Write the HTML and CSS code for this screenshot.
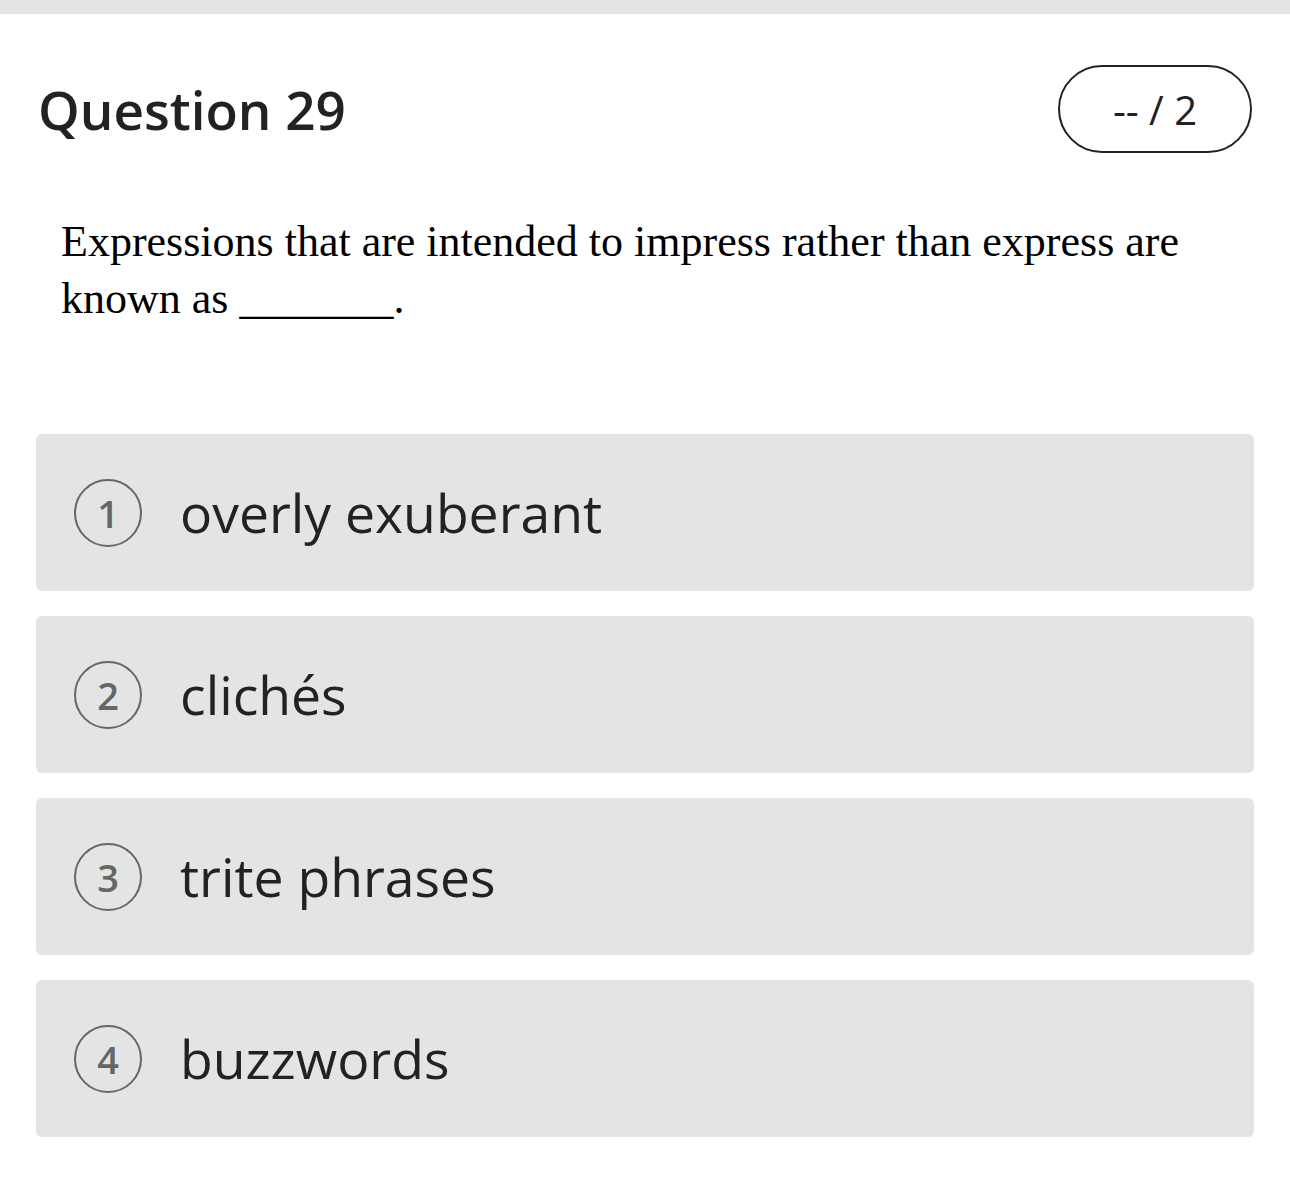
FILE: index.html
```html
<!DOCTYPE html>
<html lang="en">
<head>
    <meta charset="UTF-8">
    <meta name="viewport" content="width=device-width, initial-scale=1.0">
    <title>Question 29</title>
    <link rel="stylesheet" href="styles.css">
</head>
<body>
    <div class="top-bar"></div>

    <div class="page-content">
        <div class="question-header">
            <h1>Question 29</h1>
            <div class="points">-- / 2</div>
        </div>

        <p class="question-text">
            Expressions that are intended to impress rather than express are known as _______.
        </p>

        <div class="answers">
            <div class="answer">
                <span class="number">1</span>
                <span class="label">overly exuberant</span>
            </div>
            <div class="answer">
                <span class="number">2</span>
                <span class="label">clichés</span>
            </div>
            <div class="answer">
                <span class="number">3</span>
                <span class="label">trite phrases</span>
            </div>
            <div class="answer">
                <span class="number">4</span>
                <span class="label">buzzwords</span>
            </div>
        </div>
    </div>
</body>
</html>
```

FILE: styles.css
```css
* {
    box-sizing: border-box;
}

body {
    margin: 0;
    background-color: white;
    font-family: "Open Sans", sans-serif;
    color: #222;
}

.top-bar {
    height: 14px;
    background-color: #e4e4e4;
}

.page-content {
    padding: 0 36px;
}

.question-header {
    display: flex;
    align-items: center;
    justify-content: space-between;
    padding-top: 51px;
}

.question-header h1 {
    margin: 0 0 0 2px;
    font-size: 53px;
    font-weight: 600;
    line-height: 1;
}

.points {
    width: 194px;
    height: 88px;
    border: 2px solid #222;
    border-radius: 44px;
    display: flex;
    align-items: center;
    justify-content: center;
    font-size: 40px;
    margin-right: 2px;
}

.question-text {
    margin: 60px 0 0 25px;
    font-family: "Liberation Serif", "Times New Roman", serif;
    font-size: 44px;
    line-height: 57px;
    color: #000;
}

.answers {
    margin-top: 107px;
    display: flex;
    flex-direction: column;
    gap: 25px;
}

.answer {
    height: 157px;
    background-color: #e4e4e4;
    border-radius: 6px;
    display: flex;
    align-items: center;
    padding-left: 38px;
}

.answer .number {
    width: 68px;
    height: 68px;
    border: 2.5px solid #666;
    border-radius: 50%;
    color: #666;
    font-size: 38px;
    font-weight: 600;
    line-height: 1;
    display: flex;
    align-items: center;
    justify-content: center;
    flex-shrink: 0;
}

.answer .label {
    margin-left: 38px;
    font-size: 53.5px;
    color: #222;
}
```
